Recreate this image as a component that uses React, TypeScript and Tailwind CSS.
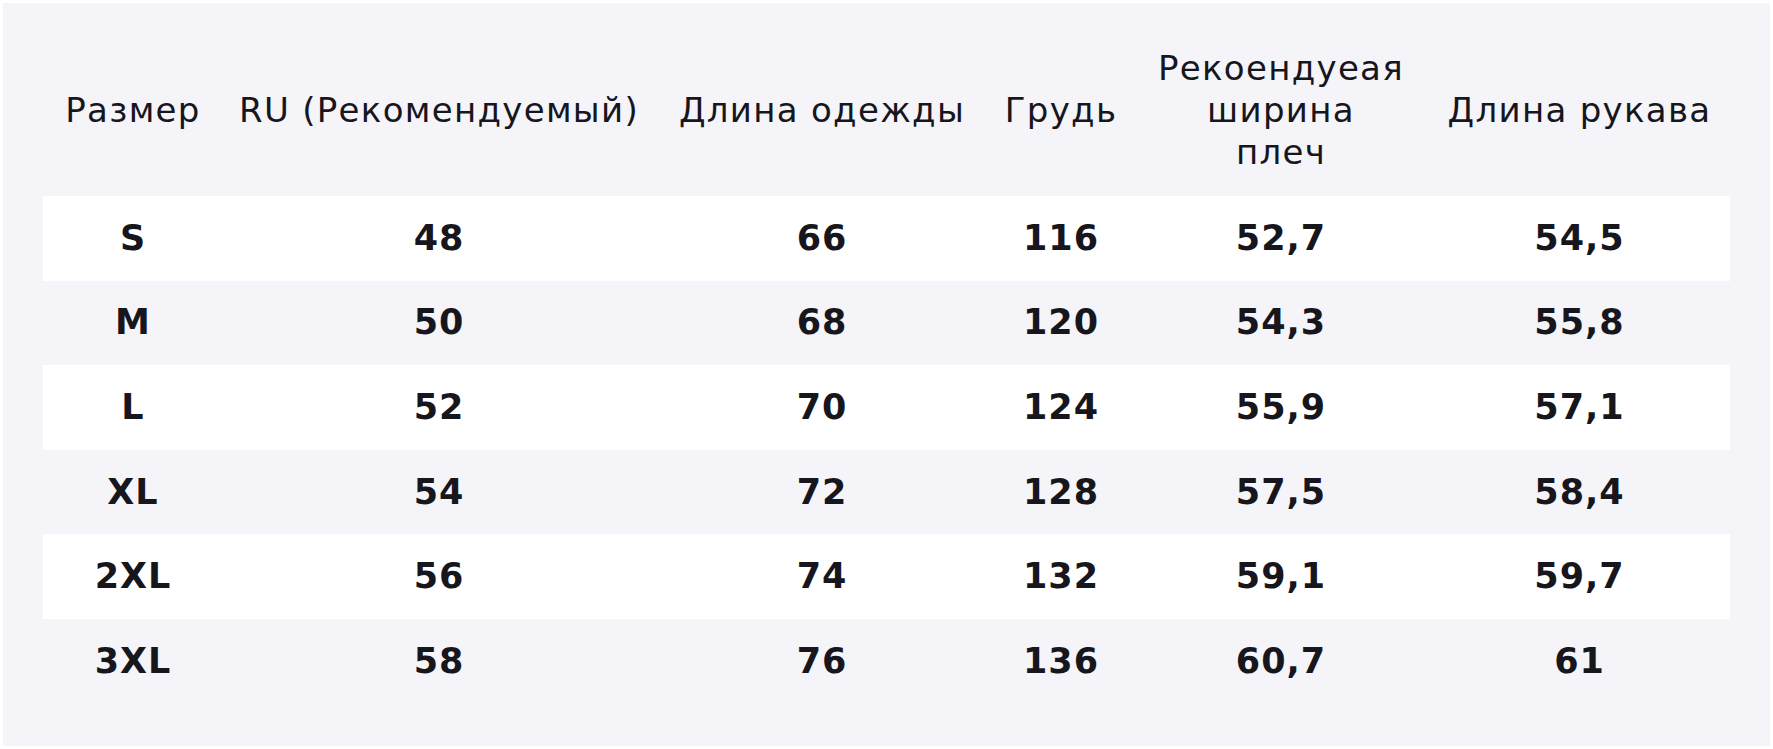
import React from "react";

const headers = [
  ["Размер"],
  ["RU (Рекомендуемый)"],
  ["Длина одежды"],
  ["Грудь"],
  ["Рекоендуеая", "ширина", "плеч"],
  ["Длина рукава"],
];

const rows = [
  ["S", "48", "66", "116", "52,7", "54,5"],
  ["M", "50", "68", "120", "54,3", "55,8"],
  ["L", "52", "70", "124", "55,9", "57,1"],
  ["XL", "54", "72", "128", "57,5", "58,4"],
  ["2XL", "56", "74", "132", "59,1", "59,7"],
  ["3XL", "58", "76", "136", "60,7", "61"],
];

export default function App() {
  return (
    <div className="w-[1773px] h-[749px] bg-white p-[3px]">
      <div
        className="h-full bg-[#f4f4f9] px-10 pt-[21px] text-[#16161c]"
        style={{ fontFamily: '"DejaVu Sans", Verdana, sans-serif' }}
      >
        <table className="w-full table-fixed border-collapse">
          <colgroup>
            <col className="w-[180px]" />
            <col className="w-[432px]" />
            <col className="w-[334px]" />
            <col className="w-[144px]" />
            <col className="w-[296px]" />
            <col />
          </colgroup>
          <thead>
            <tr className="h-[172px]">
              {headers.map((h) => (
                <th
                  key={h[0]}
                  className="px-2 text-center align-middle text-[34px] font-normal leading-[42px] tracking-[1.3px] whitespace-nowrap"
                >
                  {h.map((line) => (
                    <span key={line} className="block">
                      {line}
                    </span>
                  ))}
                </th>
              ))}
            </tr>
          </thead>
          <tbody>
            {rows.map((r, i) => (
              <tr
                key={r[0]}
                className={`h-[84.6px] ${i % 2 === 0 ? "bg-white" : ""}`}
              >
                {r.map((c, j) => (
                  <td
                    key={j}
                    className="px-2 text-center align-middle text-[35px] font-bold leading-none tracking-[1px]"
                  >
                    {c}
                  </td>
                ))}
              </tr>
            ))}
          </tbody>
        </table>
      </div>
    </div>
  );
}
